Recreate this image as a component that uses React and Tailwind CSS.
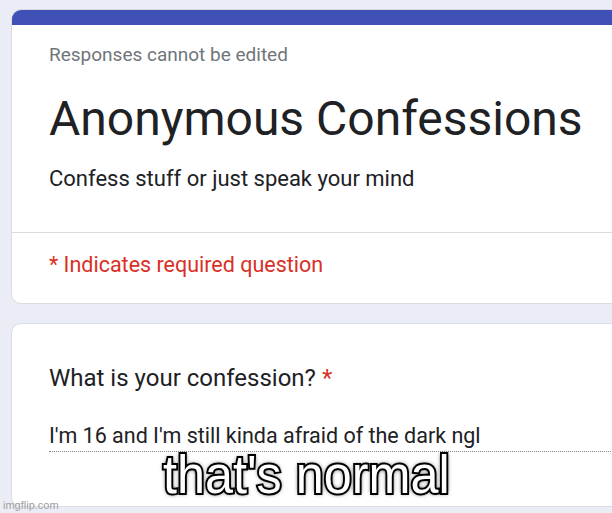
export default function App() {
  return (
    <div className="relative h-[513px] w-[612px] overflow-hidden bg-[#ebedf6] font-['Roboto',sans-serif]">
      <div className="flex w-[640px] flex-col gap-[19px] pl-[11px] pt-[9px]">
        {/* header card */}
        <div className="overflow-hidden rounded-[10px] border border-[#dadce0] bg-white">
          <div className="h-[15px] bg-[#3f51b5]" />
          <div className="px-[37px] pb-[38px] pt-[18px]">
            <p className="text-[19px] leading-[24px] text-[#70757a]">Responses cannot be edited</p>
            <h1 className="mt-[24px] text-[48px] leading-[56px] text-[#202124]">Anonymous Confessions</h1>
            <p className="mt-[17px] text-[22px] leading-[30px] text-[#202124]">Confess stuff or just speak your mind</p>
          </div>
          <div className="border-t border-[#dadce0] px-[37px] pb-[24px] pt-[18px]">
            <p className="text-[21.5px] leading-[28px] text-[#d93025]">* Indicates required question</p>
          </div>
        </div>

        {/* question card */}
        <div className="h-[184px] rounded-[10px] border border-[#dadce0] bg-white px-[37px] pt-[39px]">
          <p className="text-[24px] leading-[30px] text-[#202124]">
            What is your confession? <span className="text-[#d93025]">*</span>
          </p>
          <div className="mt-[29px] w-[600px] border-b border-dotted border-[#80868b] pb-[1px]">
            <p className="text-[21.5px] leading-[28px] text-[#202124]">I'm 16 and I'm still kinda afraid of the dark ngl</p>
          </div>
        </div>
      </div>

      <div className="absolute left-[163px] top-[448px] origin-left scale-x-[0.95] font-['Liberation_Sans',sans-serif] text-[53px] leading-none text-white [-webkit-text-stroke:4px_#000] [paint-order:stroke_fill] [text-shadow:0_0_6px_#000,0_0_3px_#000]">
        that's normal
      </div>

      <div className="absolute bottom-[1px] left-[3px] font-['Liberation_Sans',sans-serif] text-[11px] leading-[14px] text-[#a0a0a0]">
        imgflip.com
      </div>
    </div>
  );
}
